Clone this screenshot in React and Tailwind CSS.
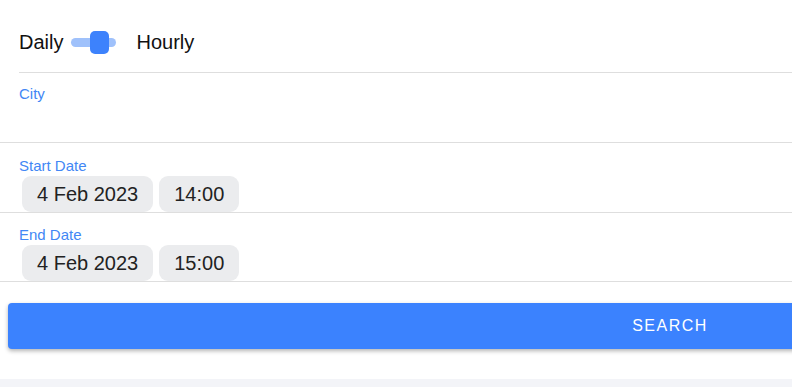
const Chip = ({ children }) => (
    <div className="h-[36px] px-[15px] flex items-center rounded-[9px] bg-[#ebecee] text-[20px] text-[#222]">
        {children}
    </div>
);

const DateRow = ({ label, date, time, top }) => (
    <div className={`border-b border-[#dedede] ${top}`}>
        <div className="pl-[19px] text-[15px] leading-[16px] text-[#4287f5]">{label}</div>
        <div className="flex gap-[6px] pl-[22px] mt-[2px]">
            <Chip>{date}</Chip>
            <Chip>{time}</Chip>
        </div>
    </div>
);

export default function App() {
    return (
        <div className="min-h-screen bg-[#f3f4f8] overflow-hidden" style={{ fontFamily: '"Liberation Sans", Arial, sans-serif' }}>
            <div className="w-[1340px] bg-white pb-[30px]">
                {/* mode toggle */}
                <div className="ml-[19px] h-[73px] pt-[12px] flex items-center border-b border-[#dedede] text-[20px] text-[#111]">
                    <span>Daily</span>
                    <div className="relative ml-[8px] w-[45px] h-[9px] rounded-full bg-[#9fc1fb]">
                        <div className="absolute left-[19px] top-[-7px] w-[19px] h-[23px] rounded-[5px] bg-[#3d82fc]" />
                    </div>
                    <span className="ml-[20px]">Hourly</span>
                </div>

                {/* city */}
                <div className="h-[70px] border-b border-[#dedede] pt-[13px]">
                    <div className="pl-[19px] text-[15px] leading-[16px] text-[#4287f5]">City</div>
                </div>

                <DateRow label="Start Date" date="4 Feb 2023" time="14:00" top="pt-[15px]" />
                <DateRow label="End Date" date="4 Feb 2023" time="15:00" top="pt-[14px]" />

                <div className="px-[8px] pt-[21px]">
                    <button className="w-full h-[46px] rounded-[4px] bg-[#3b82fe] text-white text-[16px] tracking-[1.5px] uppercase shadow-[0_2px_4px_rgba(0,0,0,0.3)]">
                        Search
                    </button>
                </div>
            </div>
        </div>
    );
}
